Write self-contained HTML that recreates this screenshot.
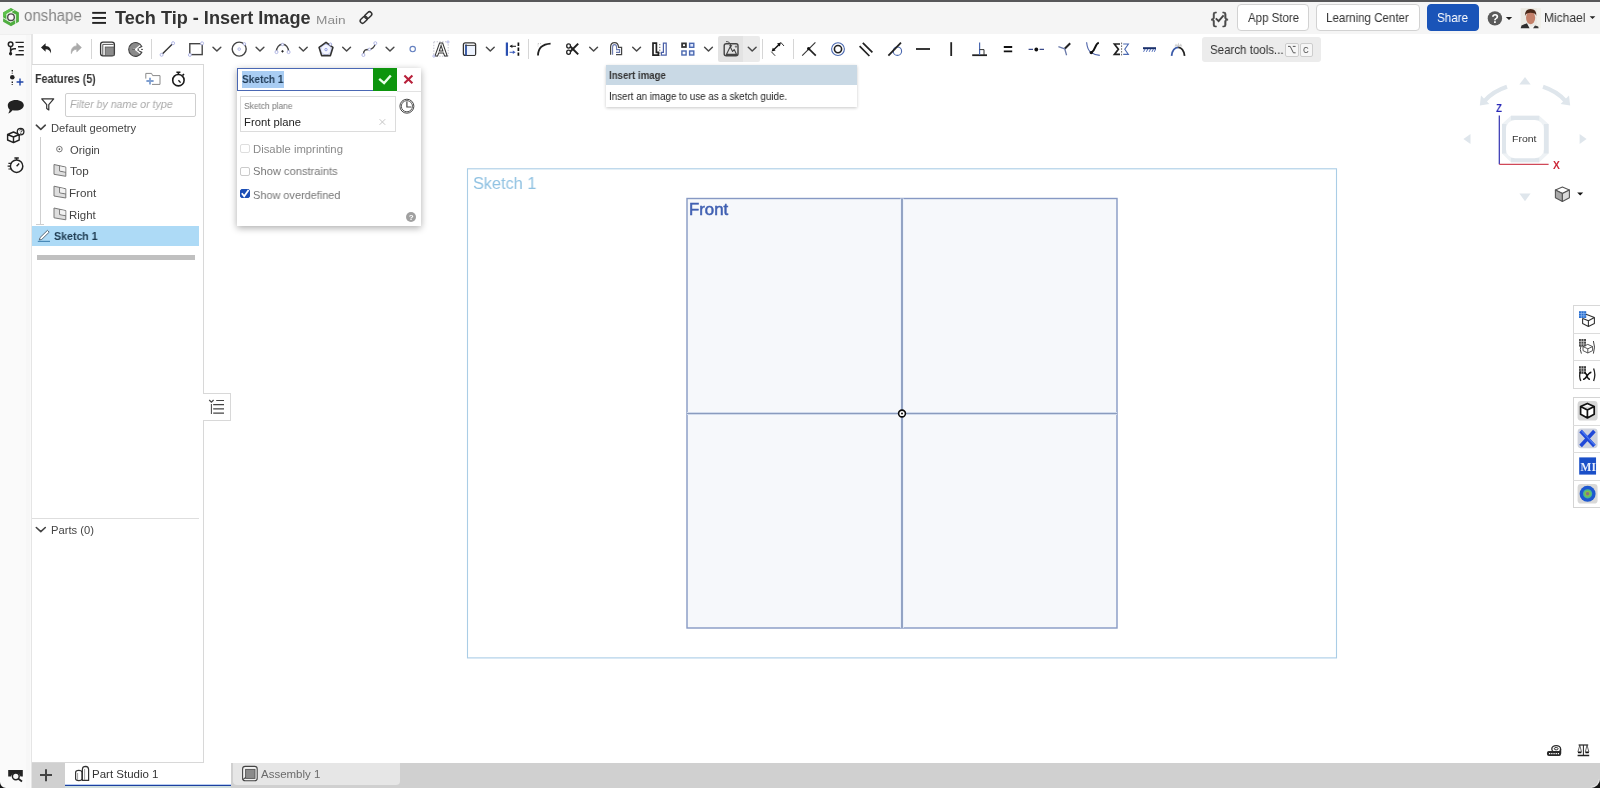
<!DOCTYPE html>
<html>
<head>
<meta charset="utf-8">
<title>Tech Tip - Insert Image</title>
<style>
*{box-sizing:border-box;margin:0;padding:0}
html,body{width:1600px;height:788px;overflow:hidden;background:#fff;font-family:"Liberation Sans",sans-serif;color:#333}
.a{position:absolute}
.t{position:absolute;white-space:nowrap;line-height:1;transform-origin:0 0;will-change:transform}
svg{position:absolute;overflow:visible;will-change:transform}
.btn{position:absolute;top:3.5px;height:27.5px;border:1px solid #d2d2d2;border-radius:4px;background:#fff}
.sep{position:absolute;top:39px;width:1px;height:20px;background:#d6d6d6}
.cb{position:absolute;width:9.5px;height:9.5px;border:1px solid #cfcfcf;border-radius:2px;background:#fff}
</style>
</head>
<body>
<!-- base regions -->
<div class="a" style="left:0;top:0;width:1600px;height:34px;background:#f5f5f5"></div>
<div class="a" style="left:0;top:0;width:1600px;height:1.5px;background:#58585a"></div>
<div class="a" style="left:0;top:34px;width:31px;height:754px;background:#fafafa;border-top:1px solid #efefef"></div><div class="a" style="left:26px;top:35px;width:4px;height:753px;background:#f7f7f7"></div><div class="a" style="left:31.1px;top:34px;width:1.5px;height:754px;background:#e5e5e5"></div>
<!-- feature panel -->
<div class="a" style="left:32px;top:64px;width:172px;height:699px;background:#fff;border-top:1px solid #d8d8d8;border-right:1px solid #d8d8d8;border-bottom:1px solid #d8d8d8"></div>
<div class="a" style="left:203px;top:393px;width:28px;height:28px;background:#fff;border:1px solid #d8d8d8;border-left:none"></div>
<div class="a" style="left:65px;top:92.5px;width:131px;height:24px;border:1px solid #cfcfcf;border-radius:2px;background:#fff"></div>
<div class="a" style="left:40px;top:137px;width:1px;height:87px;background:#cfcfcf"></div>
<div class="a" style="left:36px;top:224px;width:8px;height:1px;background:#cfcfcf"></div>
<div class="a" style="left:32px;top:226px;width:167px;height:19.5px;background:#addaf6"></div>
<div class="a" style="left:36.5px;top:254.5px;width:158px;height:5.5px;background:#c0c0c0"></div>
<div class="a" style="left:32px;top:518px;width:167px;height:1px;background:#dedede"></div>
<!-- bottom bar -->
<div class="a" style="left:32px;top:763px;width:1568px;height:25px;background:#d0d0d0"></div>
<div class="a" style="left:65px;top:763px;width:166px;height:25px;background:#fff"></div>
<div class="a" style="left:65px;top:783.6px;width:166px;height:1px;background:#b9cdf0"></div><div class="a" style="left:65px;top:784.5px;width:166px;height:2px;background:#1c40a0"></div>
<div class="a" style="left:65px;top:786px;width:166px;height:2px;background:#cfdede"></div>
<div class="a" style="left:232.5px;top:763px;width:167.5px;height:22px;background:#e6e6e6;border-radius:0 0 4px 4px"></div>
<!-- window corners -->
<svg style="left:0;top:782px" width="6" height="6"><path d="M0 0 A6 6 0 0 0 6 6 L0 6Z" fill="#151515"/></svg>
<svg style="left:1591px;top:779px" width="9" height="9"><path d="M9 0 A9 9 0 0 1 0 9 L9 9Z" fill="#151515"/><path d="M8.2 0 A8.6 8.6 0 0 1 0 8.2" fill="none" stroke="#e6e6e6" stroke-width="0.9"/></svg>

<!-- header buttons -->
<div class="btn" style="left:1236.5px;width:72.5px"></div>
<div class="btn" style="left:1316px;width:103.5px"></div>
<div class="btn" style="left:1427px;width:52px;background:#1a54b8;border-color:#1a54b8"></div>
<!-- search tools -->
<div class="a" style="left:1201.5px;top:37px;width:119.5px;height:24.5px;background:#ececec;border-radius:3px"></div>
<div class="a" style="left:1285px;top:42.5px;width:13.5px;height:14px;background:#f6f6f6;border:1px solid #cdcdcd;border-radius:2px"></div>
<div class="a" style="left:1299.5px;top:42.5px;width:13.5px;height:14px;background:#f6f6f6;border:1px solid #cdcdcd;border-radius:2px"></div>
<!-- toolbar separators -->
<div class="sep" style="left:91px"></div>
<div class="sep" style="left:151px"></div>
<div class="sep" style="left:528px"></div>
<div class="sep" style="left:761.5px"></div>
<div class="sep" style="left:793px"></div>
<!-- insert image highlight -->
<div class="a" style="left:718px;top:36px;width:25px;height:26px;background:#e3e3e3;border-radius:2px 0 0 2px"></div>
<div class="a" style="left:743px;top:36px;width:17px;height:26px;background:#ebebeb;border-radius:0 2px 2px 0"></div>

<!-- CANVAS -->
<svg style="left:0;top:0" width="1600" height="788">
<rect x="467.5" y="168.8" width="869" height="489.1" fill="none" stroke="#aacde6" stroke-width="1.1"/>
<rect x="687" y="198.5" width="430" height="429.5" fill="#f6f8fb" stroke="#8799c4" stroke-width="1.4"/>
<line x1="902" y1="198.5" x2="902" y2="628" stroke="#e8f0fb" stroke-width="3.4"/><line x1="687" y1="413.5" x2="1117" y2="413.5" stroke="#e8f0fb" stroke-width="3"/><line x1="902" y1="198.5" x2="902" y2="628" stroke="#8a9bbe" stroke-width="1.8"/>
<line x1="687" y1="413.5" x2="1117" y2="413.5" stroke="#8a9bbe" stroke-width="1.5"/>
<circle cx="902" cy="413.5" r="3.4" fill="#fff" stroke="#0a0a0a" stroke-width="1.6"/>
<circle cx="902" cy="413.5" r="1" fill="#0a0a0a"/>
</svg>

<!-- SKETCH DIALOG -->
<div class="a" style="left:236.5px;top:67.5px;width:184px;height:158.5px;background:#fff;box-shadow:0 2px 7px rgba(0,0,0,.33)"></div>
<div class="a" style="left:236.5px;top:67.5px;width:137px;height:23px;background:#fff;border:1.5px solid #4a68b4"></div>
<div class="a" style="left:241.5px;top:71px;width:42.5px;height:16.5px;background:#a9cdf3"></div>
<div class="a" style="left:373px;top:67.5px;width:24px;height:23px;background:#0d950d"></div>
<div class="a" style="left:397px;top:91px;width:23.5px;height:1px;background:#e2e2e2"></div>
<div class="a" style="left:239.5px;top:96px;width:156.5px;height:36px;border:1px solid #dcdcdc;background:#fff"></div>
<div class="cb" style="left:240px;top:143.5px;border-color:#dedede"></div>
<div class="cb" style="left:240px;top:166.5px;border-color:#cbcbcb"></div>
<div class="cb" style="left:240px;top:188.75px;background:#1c4fb6;border-color:#1c4fb6"></div>

<!-- TOOLTIP -->
<div class="a" style="left:605.5px;top:64.5px;width:251px;height:42px;background:#fff;box-shadow:0 1px 3px rgba(0,0,0,.22)"></div>
<div class="a" style="left:605.5px;top:64.5px;width:251px;height:20.5px;background:#c9d9e5"></div>

<!-- right panel boxes -->
<div class="a" style="left:1573px;top:305px;width:30px;height:84px;border:1px solid #d8d8d8;background:#fff"></div>
<div class="a" style="left:1573px;top:332.5px;width:30px;height:1px;background:#dcdcdc"></div>
<div class="a" style="left:1573px;top:360px;width:30px;height:1px;background:#dcdcdc"></div>
<div class="a" style="left:1573px;top:397px;width:30px;height:111px;border:1px solid #d4d4d4;background:#fff"></div>
<div class="a" style="left:1573px;top:424.5px;width:30px;height:1px;background:#dcdcdc"></div>
<div class="a" style="left:1573px;top:452px;width:30px;height:1px;background:#dcdcdc"></div>
<div class="a" style="left:1573px;top:479.5px;width:30px;height:1px;background:#dcdcdc"></div>

<svg style="left:0;top:0" width="1600" height="788"><g><path d="M11 8 L18.9 12.55 L18.9 21.65 L11 26.2 L3.1 21.65 L3.1 12.55Z" fill="#4fae40"/><path d="M11 8 L3.1 12.55 L3.1 17 L11 12Z" fill="#5cc04a"/><path d="M11 11.8 L15.6 14.45 L15.6 19.75 L11 22.4 L6.4 19.75 L6.4 14.45Z" fill="#f4faf2"/><path d="M6.4 14.45 L14.6 9.8 M15.6 14.45 L15.6 23.8 M11 22.4 L3 17.8" stroke="#eaf6e6" stroke-width="0.9" fill="none"/><circle cx="11" cy="17.2" r="3.3" fill="#fbf6fb" stroke="#4a4a4a" stroke-width="1.4"/></g>
<rect x="92.2" y="11.9" width="13.8" height="1.9" fill="#222"/>
<rect x="92.2" y="17.0" width="13.8" height="1.9" fill="#222"/>
<rect x="92.2" y="21.95" width="13.8" height="1.9" fill="#222"/>
<g transform="translate(366 17.5) rotate(-45)" fill="none" stroke="#333" stroke-width="1.5"><rect x="-7.2" y="-2.3" width="8" height="4.6" rx="2.3"/><rect x="-0.8" y="-2.3" width="8" height="4.6" rx="2.3"/></g>
<text x="1211" y="23.6" font-size="17" fill="#4a4a4a" stroke="#4a4a4a" stroke-width="0.5" font-family="Liberation Sans">{</text>
<text x="1222.4" y="23.6" font-size="17" fill="#4a4a4a" stroke="#4a4a4a" stroke-width="0.5" font-family="Liberation Sans">}</text>
<path d="M1215.8 18.4 L1218.6 21.2 L1223.6 15.4" fill="none" stroke="#444" stroke-width="1.9"/>
<circle cx="1494.9" cy="18.4" r="7.2" fill="#5a5a5a"/>
<text x="1491.6" y="22.7" font-size="12" font-weight="bold" fill="#fff" font-family="Liberation Sans">?</text>
<path d="M1505.8 17 L1512.2 17 L1509 20Z" fill="#222"/>
<path d="M1589.7 16.2 L1595.3 16.2 L1592.5 19.1Z" fill="#222"/>
<g><rect x="1520.7" y="8.1" width="20.1" height="20.1" fill="#ebe9e3"/><rect x="1537" y="8.1" width="3.8" height="20.1" fill="#f2f0ea"/><ellipse cx="1530.6" cy="17.8" rx="4.6" ry="6.4" fill="#c48068"/><path d="M1525 16 Q1524.6 9.2 1530.6 9 Q1536.8 9.2 1536.3 16 Q1535.5 12.8 1530.6 12.8 Q1526 12.8 1525 16Z" fill="#4a2818"/><path d="M1520.7 28.2 L1521.5 25.5 L1527 23.2 L1529.5 28.2Z" fill="#2e2e2e"/><path d="M1527 23.2 L1530.5 28.2 L1534 28.2 L1535 25 L1531 27 Z" fill="#f6f4f2"/><path d="M1533 28.2 L1535 25.4 L1538.2 26.6 L1538.6 28.2Z" fill="#3a3a3a"/></g>
<g fill="none" stroke="#222" stroke-width="1.5"><circle cx="10.6" cy="44.2" r="2.3"/><path d="M10.6 46.5 V55.2 M10.6 52 Q10.6 48.8 14.6 48.8 H16"/><circle cx="10.6" cy="53.6" r="0.9" fill="#222"/><path d="M15.5 42.4 H23.8 M18 46.8 H23.8 M18.6 50.6 H23.8 M15.5 54.8 H23.8" stroke-width="1.4"/></g>
<g><path d="M12.3 70 V73.5 M12.3 81.5 V85" stroke="#222" stroke-width="1.4" stroke-dasharray="1.5 1.2"/><circle cx="12.3" cy="77.3" r="2.3" fill="#222"/><path d="M16.6 82 H23.4 M20 78.6 V85.4" stroke="#1f45a8" stroke-width="1.4"/></g>
<path d="M15.8 100 C20.4 100 23.8 102.3 23.8 105.3 C23.8 108.3 20.4 110.6 15.8 110.6 C14.6 110.6 13.5 110.5 12.5 110.2 C11.5 111.6 10 112.8 8.2 113.5 C9 112.4 9.6 111 9.6 109.6 C8.4 108.6 7.8 107 7.8 105.3 C7.8 102.3 11.2 100 15.8 100Z" fill="#222"/>
<g fill="none" stroke="#222" stroke-width="1.4" stroke-linejoin="round"><path d="M7.6 134.5 L13.5 132 L19.2 134.5 V140 L13.5 142.6 L7.6 140Z M7.6 134.5 L13.5 137 L19.2 134.5 M13.5 137 V142.6"/><circle cx="20.6" cy="131.6" r="3.3" stroke-width="1.3" fill="#f8f8f8"/></g><text x="18.9" y="133.9" font-size="6.5" font-weight="bold" fill="#222" font-family="Liberation Sans">?</text>
<g fill="none" stroke="#222" stroke-width="1.5"><circle cx="16.6" cy="166.2" r="6.2"/><path d="M14.4 158 H18.8 M16.6 158 V160 M16.6 166.2 L19.2 163.4" stroke-width="1.4"/><path d="M8.4 163.4 H11.4 M7.6 166.2 H10.4 M8.4 169 H11.4" stroke-width="1.2"/></g>
<g><path d="M8.2 770 H22.8 V776.5 H20.5 A5 5 0 0 0 11 776.5 H8.2Z" fill="#222"/><circle cx="15.8" cy="776.3" r="3.4" fill="#f8f8f8" stroke="#222" stroke-width="1.5"/><path d="M18.4 778.8 L22 781.5" stroke="#222" stroke-width="1.8"/></g>
<path d="M41 47.5 L45.6 43.2 V45.9 C49.6 46 51.6 49 51 53.6 C50.2 50.8 48.8 49.4 45.6 49.3 V51.8Z" fill="#222"/>
<path d="M81.4 47.5 L76.8 43.2 V45.9 C72.8 46 70.8 49 71.4 53.6 C72.2 50.8 73.6 49.4 76.8 49.3 V51.8Z" fill="#aaa" stroke="#aaa" stroke-width="0.7" stroke-linejoin="round"/>
<g><rect x="100.6" y="42.2" width="13.8" height="13.6" rx="2.4" fill="#fff" stroke="#333" stroke-width="1.3"/><path d="M102.8 55 V44.4 H113.6" fill="none" stroke="#555" stroke-width="1"/><rect x="105.2" y="47" width="8.8" height="8.6" fill="#8c8c8c" stroke="#555" stroke-width="0.8"/></g>
<g><path d="M135.3 49.4 L141.9 46.6 A6.9 6.9 0 1 0 141.9 52.2Z" fill="#8a8a8a" stroke="#444" stroke-width="1.1" stroke-linejoin="round"/><path d="M135.3 49.4 L140.2 45.6 M135.3 49.4 L140.2 53.2 M133 49.4 H143" stroke="#fff" stroke-width="1.3"/><path d="M132.5 49.4 H135 M137.5 49.4 H139 M141 49.4 H143" stroke="#444" stroke-width="0.9"/></g>
<path d="M161.8 54.5 L172.9 43.5" stroke="#333" stroke-width="1.4"/>
<circle cx="161.6" cy="54.8" r="1.5" fill="#fff" stroke="#a6ace2" stroke-width="0.85"/>
<circle cx="173.1" cy="43.2" r="1.5" fill="#fff" stroke="#a6ace2" stroke-width="0.85"/>
<rect x="189.8" y="43.7" width="12.4" height="10.9" fill="none" stroke="#444" stroke-width="1.4"/>
<circle cx="189.9" cy="54.9" r="1.5" fill="#fff" stroke="#a6ace2" stroke-width="0.85"/>
<circle cx="202.1" cy="43.3" r="1.5" fill="#fff" stroke="#a6ace2" stroke-width="0.85"/>
<path d="M213.0 47.2 L216.9 51.0 L220.8 47.2" fill="none" stroke="#4a4a4a" stroke-width="1.5" stroke-linecap="round" stroke-linejoin="round"/>
<circle cx="239.2" cy="49.1" r="7" fill="none" stroke="#444" stroke-width="1.4"/>
<circle cx="239.2" cy="49.1" r="1.3" fill="#fff" stroke="#a6ace2" stroke-width="0.85"/>
<circle cx="244.4" cy="43.9" r="1.3" fill="#fff" stroke="#a6ace2" stroke-width="0.85"/>
<path d="M256.1 47.2 L260 51.0 L263.9 47.2" fill="none" stroke="#4a4a4a" stroke-width="1.5" stroke-linecap="round" stroke-linejoin="round"/>
<path d="M276.4 51.8 A6.1 7.6 0 0 1 288.6 51.8" fill="none" stroke="#444" stroke-width="1.4"/>
<circle cx="276.5" cy="52.1" r="1.5" fill="#fff" stroke="#a6ace2" stroke-width="0.85"/>
<circle cx="288.6" cy="52.1" r="1.5" fill="#fff" stroke="#a6ace2" stroke-width="0.85"/>
<circle cx="282.5" cy="44.5" r="1.2" fill="#fff" stroke="#a6ace2" stroke-width="0.85"/>
<path d="M282.5 49.9 L283.9 51.3 L282.5 52.7 L281.1 51.3Z" fill="#222"/>
<path d="M299.40000000000003 47.2 L303.3 51.0 L307.2 47.2" fill="none" stroke="#4a4a4a" stroke-width="1.5" stroke-linecap="round" stroke-linejoin="round"/>
<circle cx="326" cy="49.6" r="5.2" fill="#f4f6ff" stroke="#bcc4f0" stroke-width="0.9"/>
<path d="M326 42.4 L332.9 47.4 L330.4 55.6 L321.6 55.6 L319.1 47.4Z" fill="none" stroke="#333" stroke-width="1.6" stroke-linejoin="round"/>
<circle cx="326" cy="49.6" r="1.2" fill="none" stroke="#8a96e0" stroke-width="0.85"/>
<circle cx="330.5" cy="44.2" r="1.2" fill="#fff" stroke="#9aa0dc" stroke-width="0.85"/>
<path d="M342.70000000000005 47.2 L346.6 51.0 L350.5 47.2" fill="none" stroke="#4a4a4a" stroke-width="1.5" stroke-linecap="round" stroke-linejoin="round"/>
<path d="M363.4 54.6 C363.6 49 366 49.6 369.4 49.4 C373 49.2 374.2 47.6 375.3 43.6" fill="none" stroke="#444" stroke-width="1.4"/>
<circle cx="363.4" cy="55" r="1.5" fill="#fff" stroke="#a6ace2" stroke-width="0.85"/>
<circle cx="369.4" cy="49.4" r="1.3" fill="#fff" stroke="#a6ace2" stroke-width="0.85"/>
<circle cx="375.3" cy="43.2" r="1.5" fill="#fff" stroke="#a6ace2" stroke-width="0.85"/>
<path d="M386.1 47.2 L390 51.0 L393.9 47.2" fill="none" stroke="#4a4a4a" stroke-width="1.5" stroke-linecap="round" stroke-linejoin="round"/>
<circle cx="412.7" cy="49.1" r="2.7" fill="none" stroke="#6480c0" stroke-width="1.1"/>
<rect x="433.8" y="41.8" width="14.4" height="14.4" fill="none" stroke="#b4b4c4" stroke-width="0.8" stroke-dasharray="1.4 1.4"/>
<text x="434.6" y="55.6" font-size="18" font-weight="bold" fill="#fff" stroke="#333" stroke-width="1" font-family="Liberation Sans" textLength="13.2" lengthAdjust="spacingAndGlyphs">A</text>
<circle cx="448" cy="42" r="1.1" fill="#fff" stroke="#a6ace2" stroke-width="0.85"/>
<circle cx="433.9" cy="56.1" r="1.1" fill="#fff" stroke="#a6ace2" stroke-width="0.85"/>
<g><rect x="463.4" y="42.8" width="12.2" height="12.6" rx="2" fill="#fff" stroke="#333" stroke-width="1.3"/><rect x="466.8" y="45.9" width="8.2" height="8.9" fill="#eef4ff"/><path d="M466 44.6 V55.4" stroke="#2a4fa0" stroke-width="1.8"/><path d="M465.4 45.4 H475.6" stroke="#444" stroke-width="1"/></g>
<path d="M486.40000000000003 47.2 L490.3 51.0 L494.2 47.2" fill="none" stroke="#4a4a4a" stroke-width="1.5" stroke-linecap="round" stroke-linejoin="round"/>
<path d="M506.9 42.5 V55.8" stroke="#2a4fb0" stroke-width="2.2"/>
<path d="M518.4 42.5 V55.8" stroke="#111" stroke-width="1.7" stroke-dasharray="3.4 1.6"/>
<path d="M510 46.3 H516" stroke="#222" stroke-width="1.1"/><path d="M509.6 46.3 L512.4 44.6 V48Z" fill="#222"/>
<path d="M509.6 52.3 H514" stroke="#4a68c0" stroke-width="1.1"/><path d="M515.6 52.3 L512.8 50.6 V54Z" fill="#3a5ab8"/>
<path d="M538 55.4 Q538.2 44.4 550.6 43.6" fill="none" stroke="#222" stroke-width="1.8"/>
<path d="M538 43.6 H541 M538 43.6 V46.4" stroke="#bbb" stroke-width="0.8" stroke-dasharray="1 1"/>
<g fill="none" stroke="#222"><path d="M578.2 43.6 L570.6 51.2 M578.2 54.4 L570.6 46.8" stroke-width="2"/><ellipse cx="568.6" cy="46" rx="1.9" ry="2.1" stroke-width="1.3"/><ellipse cx="568.6" cy="52.2" rx="1.9" ry="2.1" stroke-width="1.3"/></g>
<path d="M589.7 47.2 L593.6 51.0 L597.5 47.2" fill="none" stroke="#4a4a4a" stroke-width="1.5" stroke-linecap="round" stroke-linejoin="round"/>
<g fill="none"><path d="M610.6 54.8 V47 Q610.6 42.6 614.6 42.6 Q618.2 42.6 618.6 47.4 H621.6 V54.6 H616" stroke="#444" stroke-width="1.2"/><path d="M612.6 54.8 V47.2 Q612.6 44.6 614.6 44.6 Q616.6 44.6 616.6 47.4 V49.6 H619.6 V52.4 H616" stroke="#6a7ab0" stroke-width="1.1"/></g>
<path d="M632.7 47.2 L636.6 51.0 L640.5 47.2" fill="none" stroke="#4a4a4a" stroke-width="1.5" stroke-linecap="round" stroke-linejoin="round"/>
<path d="M653 43.2 H656.4 V52.4 H658.4 V55.2 H653Z" fill="none" stroke="#222" stroke-width="1.7"/>
<path d="M659.8 44 V56" stroke="#555" stroke-width="1" stroke-dasharray="1.2 1.6"/>
<path d="M666.2 43.2 H663.4 V52.4 H661.4 V55.2 H666.2Z" fill="none" stroke="#4a60a8" stroke-width="1.2"/>
<rect x="682.1" y="43.4" width="3.8" height="3.6" fill="none" stroke="#333" stroke-width="1.8"/>
<rect x="689.6" y="43.3" width="4.2" height="4" fill="#dfe8ff" stroke="#4a68b0" stroke-width="1.4"/>
<rect x="681.9" y="51" width="4.2" height="4" fill="#fff" stroke="#4a68b0" stroke-width="1.4"/>
<rect x="689.6" y="51" width="4.2" height="4" fill="#dfe8ff" stroke="#4a68b0" stroke-width="1.4"/>
<path d="M704.6 47.2 L708.5 51.0 L712.4 47.2" fill="none" stroke="#4a4a4a" stroke-width="1.5" stroke-linecap="round" stroke-linejoin="round"/>
<g fill="none" stroke="#444"><rect x="724.2" y="43.8" width="13.8" height="12" rx="2" stroke-width="1.4"/><path d="M726.4 54.4 L730.2 46.8 L732.6 51.4 L734.2 49.6 L736.6 54.4Z" stroke-width="1.1" stroke-linejoin="round"/><circle cx="736" cy="46.6" r="0.7" stroke-width="0.8"/><path d="M726 41.6 Q730.4 41.4 730.8 46" stroke-width="0.9"/></g><path d="M729 45.2 L732.4 45.2 L730.8 47.6Z" fill="#333"/>
<path d="M748.3000000000001 47.2 L752.2 51.0 L756.1 47.2" fill="none" stroke="#4a4a4a" stroke-width="1.5" stroke-linecap="round" stroke-linejoin="round"/>
<path d="M773.4 50 L779.4 44.2" stroke="#111" stroke-width="1.5"/>
<path d="M771.6 51.6 L775.6 50.6 L772.8 47.8Z M781 42.6 L777 43.6 L779.8 46.4Z" fill="#111"/>
<path d="M780.6 42.2 L784 46 M771.4 51.8 L775.2 55.8" stroke="#333" stroke-width="1"/>
<path d="M802.2 55.6 L815.4 42.4" stroke="#333" stroke-width="1.1"/><path d="M808.4 48.4 L815.8 55.6" stroke="#222" stroke-width="1.7"/><circle cx="808.6" cy="48.6" r="1.6" fill="#111"/>
<circle cx="838" cy="49.1" r="6.4" fill="none" stroke="#4a68b0" stroke-width="1.1"/><circle cx="838" cy="49.1" r="3.6" fill="none" stroke="#222" stroke-width="1.6"/>
<path d="M859.6 46.2 L869.4 56 M862.8 42.8 L872.4 52.4" stroke="#222" stroke-width="1.7"/>
<circle cx="897.4" cy="51.2" r="4.2" fill="none" stroke="#4a68b0" stroke-width="1.1"/><path d="M888.4 55.6 L901 42.6" stroke="#222" stroke-width="1.8"/>
<path d="M916 49 H930" stroke="#222" stroke-width="1.8"/>
<path d="M951.2 42.2 V56" stroke="#222" stroke-width="1.8"/>
<path d="M972.2 55.2 H987" stroke="#222" stroke-width="1.8"/><path d="M979.6 42.6 V55" stroke="#4a68b0" stroke-width="1.2"/><path d="M979.6 49.6 H984 V55" fill="none" stroke="#333" stroke-width="1"/>
<path d="M1003.8 47 H1012.2 M1003.8 51.4 H1012.2" stroke="#111" stroke-width="1.8"/>
<path d="M1028.6 49.4 H1033 M1039.6 49.4 H1044" stroke="#3a4a8a" stroke-width="1.1"/><circle cx="1036.3" cy="49.5" r="1.9" fill="#111"/>
<path d="M1064.7 48.8 L1070.2 43.2" stroke="#222" stroke-width="2"/><path d="M1064.7 48.8 L1058.4 46.6 M1064.7 48.8 L1066.6 55.2" stroke="#6a7aaa" stroke-width="1.3" fill="none"/>
<path d="M1086.6 42.2 Q1087.4 50.4 1091.4 52.6 Q1094.6 55 1099.8 55.4" fill="none" stroke="#4a60a8" stroke-width="1.1"/>
<path d="M1091.4 52.6 C1096 50 1094.6 44 1098.8 42.6" fill="none" stroke="#111" stroke-width="2"/><circle cx="1091.3" cy="52.6" r="1.7" fill="#111"/>
<path d="M1120 44 H1114.4 L1118.4 49.2 L1114.4 54.4 H1120" fill="none" stroke="#222" stroke-width="1.7"/>
<path d="M1121.6 42.6 V56" stroke="#555" stroke-width="0.9" stroke-dasharray="1.6 1.2"/>
<path d="M1123.2 44 H1128.4 L1124.8 49.2 L1128.4 54.4 H1123.2" fill="none" stroke="#4a68b0" stroke-width="1.1"/>
<path d="M1143 48.2 H1156" stroke="#1a2f6a" stroke-width="2"/><path d="M1145 49 L1143.6 51.8 M1147.8 49 L1146.4 51.8 M1150.6 49 L1149.2 51.8 M1153.4 49 L1152 51.8 M1155.6 49 L1154.4 51.8" stroke="#3a5ab0" stroke-width="0.9"/>
<path d="M1174.4 46.4 L1176 43.4 L1177.2 45.6 L1178.4 42.6 L1179.6 45.6 L1180.8 43.4 L1182.4 46.6Z" fill="#d0d0d0"/>
<path d="M1171.6 55.8 Q1172.6 47.6 1178.2 47.4" fill="none" stroke="#3a5aa8" stroke-width="1.8"/><path d="M1178.2 47.4 Q1183.4 47.6 1184.6 55.8" fill="none" stroke="#222" stroke-width="1.8"/>
<path d="M1288 46.4 H1290.2 L1293.4 52.8 H1295.6 M1292.8 46.4 H1295.6" fill="none" stroke="#444" stroke-width="0.9"/>
<path d="M145.8 78.6 V73.4 H151.6 L152.6 75.6 H160 V84.4 H152" fill="none" stroke="#8a8a8a" stroke-width="1"/>
<path d="M146.4 81 H153.6 M150 77.8 V84.6" stroke="#7f9fd0" stroke-width="1.8"/>
<g fill="none" stroke="#1a1a1a"><circle cx="178.4" cy="80.2" r="5.7" stroke-width="1.6"/><path d="M176.4 72.2 H180.4 M178.4 72.4 V74.4 M182.6 75.4 L184 74" stroke-width="1.6"/><path d="M178.4 80.2 L180.6 82.6" stroke-width="1.4"/></g>
<path d="M41.7 98.9 H53.7 L48.8 104.6 V110 L46.7 108.6 V104.6Z" fill="none" stroke="#333" stroke-width="1.2" stroke-linejoin="round"/>
<path d="M36.3 125.2 L40.8 129.4 L45.3 125.2" fill="none" stroke="#444" stroke-width="1.6" stroke-linecap="round" stroke-linejoin="round"/>
<path d="M36.3 527.5 L40.8 531.7 L45.3 527.5" fill="none" stroke="#444" stroke-width="1.6" stroke-linecap="round" stroke-linejoin="round"/>
<circle cx="59.4" cy="149.1" r="2.8" fill="none" stroke="#6a6a6a" stroke-width="0.9"/><circle cx="59.4" cy="149.1" r="0.9" fill="#555"/>
<path d="M54 164.5 L65.8 167.1 V176.3 L54 174.3Z" fill="#dedede" stroke="#777" stroke-width="1"/>
<path d="M59.6 165.8 V171.1 L65.8 172.3" fill="none" stroke="#777" stroke-width="1"/>
<path d="M60.1 166.4 L65.3 167.5 V171.6 L60.1 170.6Z" fill="#f2f2f2"/>
<path d="M54 186.2 L65.8 188.79999999999998 V198.0 L54 196.0Z" fill="#dedede" stroke="#777" stroke-width="1"/>
<path d="M59.6 187.5 V192.79999999999998 L65.8 194.0" fill="none" stroke="#777" stroke-width="1"/>
<path d="M60.1 188.1 L65.3 189.2 V193.29999999999998 L60.1 192.29999999999998Z" fill="#f2f2f2"/>
<path d="M54 208 L65.8 210.6 V219.8 L54 217.8Z" fill="#dedede" stroke="#777" stroke-width="1"/>
<path d="M59.6 209.3 V214.6 L65.8 215.8" fill="none" stroke="#777" stroke-width="1"/>
<path d="M60.1 209.9 L65.3 211 V215.1 L60.1 214.1Z" fill="#f2f2f2"/>
<path d="M39.3 240 L40 237.6 L47.4 230.4 L49.2 232.2 L41.8 239.4Z" fill="#fff" stroke="#5a6a78" stroke-width="1" stroke-linejoin="round"/>
<path d="M37.8 241.4 H50" stroke="#4a8ab8" stroke-width="1.2"/>
<g stroke="#444" fill="none"><path d="M216.2 400.5 H224 M213.2 404.7 H224 M213.2 408.9 H224 M213.2 413.2 H224" stroke-width="1.2"/><path d="M211.4 404 V414" stroke-width="1"/><path d="M209.2 400 L211.4 402.2 L213.6 400" stroke-width="1.2"/></g>
<path d="M379.2 78.8 L384.1 83.1 L390.8 75.5" fill="none" stroke="#e8ffe8" stroke-width="2.4"/>
<path d="M404.4 75.4 L412.4 83.2 M412.4 75.4 L404.4 83.2" stroke="#b8203a" stroke-width="2.1"/>
<g fill="none" stroke="#444"><circle cx="406.9" cy="106.2" r="7" stroke-width="1"/><circle cx="406.9" cy="106.2" r="5.6" stroke-width="0.9"/><path d="M406.9 101.6 V107 H411.4" stroke-width="1.2"/></g>
<path d="M379.6 119.2 L385.2 124.8 M385.2 119.2 L379.6 124.8" stroke="#c4c4c4" stroke-width="1"/>
<path d="M241.8 193.2 L244.2 196.2 L248.6 190" fill="none" stroke="#fff" stroke-width="1.8"/>
<circle cx="411" cy="217" r="5" fill="#a0a0a0"/><text x="408.8" y="220" font-size="8" font-weight="bold" fill="#fff" font-family="Liberation Sans">?</text>
<path d="M1525 77 L1530.7 84.6 H1519.3Z" fill="#dfe6ec"/>
<path d="M1525 201.2 L1530.6 193.4 H1519.4Z" fill="#dfe6ec"/>
<path d="M1463.4 139 L1470.5 134 V144Z" fill="#dfe6ec"/>
<path d="M1586.6 139 L1579.6 134 V144Z" fill="#dfe6ec"/>
<path d="M1507 86.8 Q1492.6 91.4 1484.4 101.2" fill="none" stroke="#dfe6ec" stroke-width="4.2"/><path d="M1479.8 105.6 L1481 95.4 L1489.4 104Z" fill="#dfe6ec"/>
<path d="M1543 86.8 Q1557.4 91.4 1565.6 101.2" fill="none" stroke="#dfe6ec" stroke-width="4.2"/><path d="M1570.2 105.6 L1569 95.4 L1560.6 104Z" fill="#dfe6ec"/>
<path d="M1510.9 115.7 H1539.3 L1548.6 124 V153.4 L1539.3 162.3 H1510.9 L1502 153.4 V124Z" fill="#eef2f5"/>
<path d="M1510.9 115.7 H1539.3 V120.5 H1510.9Z M1510.9 157.8 H1539.3 V162.3 H1510.9Z M1502 124 H1506.4 V153.4 H1502Z M1544 124 H1548.6 V153.4 H1544Z" fill="#dfe6ec"/>
<rect x="1506" y="120" width="37.8" height="38.2" rx="9" fill="#fff"/>
<path d="M1499.3 115.6 V164.3" stroke="#3030b0" stroke-width="1.2"/><path d="M1499.3 164.3 H1548.6" stroke="#d04858" stroke-width="1.2"/>
<g stroke="#555" stroke-width="1.1" stroke-linejoin="round"><path d="M1562.4 187 L1569.4 190 L1562.4 193.6 L1555.4 190Z" fill="#fff"/><path d="M1555.4 190 L1562.4 193.6 V201.4 L1555.4 197.8Z" fill="#a8a8a8"/><path d="M1569.4 190 L1562.4 193.6 V201.4 L1569.4 197.8Z" fill="#dadada"/></g>
<path d="M1577.2 192.6 H1583.2 L1580.2 195.5Z" fill="#111"/>
<path d="M40 775.1 H52 M46 769.2 V781.2" stroke="#444" stroke-width="2"/>
<g fill="#fff" stroke="#333" stroke-width="1.2"><path d="M75.6 772.4 Q75.6 770.4 78.8 770.4 Q82 770.4 82 772.4 V778.8 Q82 780.6 78.8 780.6 Q75.6 780.6 75.6 778.8Z"/><path d="M82.4 780.4 V769 Q82.6 766.4 85.6 766.4 Q88.6 766.6 88.6 769.6 V780.4Z"/><path d="M77.6 773 V780 M84.6 769 V780" stroke-width="0.7" stroke="#777" fill="none"/></g>
<g stroke="#444" stroke-width="1.1"><rect x="242.6" y="766.4" width="14.6" height="14.4" rx="2.6" fill="#f2f2f2"/><rect x="245.6" y="769.4" width="9.4" height="9" fill="#8a8a8a" stroke="#555" stroke-width="0.9"/><path d="M243 779.6 L245.6 777.4" fill="none"/></g>
<g fill="none" stroke="#2a2a2a"><ellipse cx="1556.2" cy="748.9" rx="4.4" ry="3.3" stroke-width="1.3"/><ellipse cx="1556.2" cy="748.7" rx="1.9" ry="1.2" stroke-width="1"/><path d="M1560.6 749 V753.6" stroke-width="1.3"/><rect x="1547.6" y="751.6" width="12.8" height="3.8" rx="1.4" stroke-width="1.3" fill="#2a2a2a"/><path d="M1549 753.7 H1559" stroke="#fff" stroke-width="1.3" stroke-dasharray="1.3 0.9"/></g>
<g fill="none" stroke="#222"><path d="M1578.6 745 H1588.2" stroke-width="1.2"/><path d="M1583.4 745 V755" stroke-width="1"/><path d="M1577.6 755.5 H1589.2" stroke-width="1.5"/><path d="M1579.8 745.2 L1578 751.6 M1579.8 745.2 L1581.4 751.6 M1587 745.2 L1585.4 751.6 M1587 745.2 L1588.8 751.6" stroke-width="0.7"/></g><path d="M1577.6 751.4 H1581.8 L1581.2 753.2 H1578.2Z M1585 751.4 H1589.2 L1588.6 753.2 H1585.6Z" fill="#111"/>
<g><rect x="1579" y="311.2" width="7.2" height="6.8" fill="#2a6fd0"/><path d="M1579 313.5 H1586.2 M1579 315.8 H1586.2 M1581.4 311.2 V318 M1583.8 311.2 V318" stroke="#9cc0f0" stroke-width="0.6"/><path d="M1586 314.2 L1594.4 317.6 V323.4 L1588.4 326.4 L1582.6 323.4 V318.2 M1582.8 318.4 L1588.4 320.8 L1594.4 317.6 M1588.4 320.8 V326.4" fill="none" stroke="#333" stroke-width="1.1" stroke-linejoin="round"/></g>
<g><rect x="1579" y="339" width="7" height="7.6" fill="#4a4a4a"/><path d="M1579 341.5 H1586 M1579 344 H1586 M1581.3 339 V346.6 M1583.6 339 V346.6" stroke="#ddd" stroke-width="0.6"/><path d="M1581 345.5 Q1579.4 349.6 1581.4 353.6 M1593.4 341 Q1595.6 347 1593.4 353.6" fill="none" stroke="#444" stroke-width="1"/><path d="M1583 346.6 L1587.8 344.4 L1592.6 346.6 V350.6 L1587.8 353 L1583 350.6Z M1583 346.6 L1587.8 348.8 L1592.6 346.6 M1587.8 348.8 V353" fill="#fff" stroke="#444" stroke-width="0.9" stroke-linejoin="round"/></g>
<g><rect x="1579" y="366.2" width="7" height="7.6" fill="#3a3a3a"/><path d="M1579 368.7 H1586 M1579 371.2 H1586 M1581.3 366.2 V373.8 M1583.6 366.2 V373.8" stroke="#ddd" stroke-width="0.6"/><path d="M1580.6 371.6 Q1578.6 376.2 1580.8 381 M1593.6 368.6 Q1596 374.8 1593.6 381" fill="none" stroke="#222" stroke-width="1.3"/><path d="M1583 379.4 Q1584.8 379.4 1587 376 Q1589.2 372.4 1591.4 372.2 M1584.4 372.8 Q1586 372.8 1587 376 Q1588 379.4 1590 379.2" fill="none" stroke="#111" stroke-width="1.4"/></g>
<rect x="1577.6" y="401" width="20" height="19.6" rx="3.4" fill="#d6d6d6"/>
<path d="M1587.4 403.4 L1594.2 406.6 V414.2 L1587.4 418 L1580.6 414.2 V406.6Z M1580.6 406.6 L1587.4 410 L1594.2 406.6 M1587.4 410 V418" fill="#fff" stroke="#111" stroke-width="1.7" stroke-linejoin="round"/>
<rect x="1577.6" y="428.6" width="20" height="19.6" rx="3.4" fill="#cfd3de"/>
<path d="M1580.6 431 L1594.4 446 M1594.4 431 L1580.6 446" stroke="#2048d8" stroke-width="3.6"/><path d="M1581.6 431 L1595 445.4" stroke="#4a7af0" stroke-width="1.2"/>
<rect x="1579.2" y="457.4" width="17" height="17.2" fill="#1a4fc8"/>
<text x="1580.6" y="471" font-size="11.5" font-weight="bold" fill="#e8eefc" font-family="Liberation Serif">MI</text>
<rect x="1596.2" y="456" width="4" height="20" fill="#fff"/>
<rect x="1577.6" y="484" width="20" height="19.6" rx="3.4" fill="#d8d8d8"/>
<circle cx="1587.6" cy="493.8" r="8" fill="#1e58d0"/><circle cx="1587.6" cy="493.8" r="4.6" fill="#4ab890"/><circle cx="1587.6" cy="493.8" r="3" fill="#88c040"/><circle cx="1587.6" cy="493.8" r="1.7" fill="#887088"/></svg>

<span class="t" style="left:24.28px;top:8px;font-size:15.6px;color:#858585;transform:scaleX(0.9658)">onshape</span>
<span class="t" style="left:115.35px;top:9px;font-size:18.12px;color:#333;transform:scaleX(0.9982);font-weight:bold">Tech Tip - Insert Image</span>
<span class="t" style="left:316.34px;top:15px;font-size:11.81px;color:#8c8c8c;transform:scaleX(1.1579)">Main</span>
<span class="t" style="left:1247.50px;top:12px;font-size:12.4px;color:#333;transform:scaleX(0.9266)">App Store</span>
<span class="t" style="left:1326.07px;top:12px;font-size:12.4px;color:#333;transform:scaleX(0.9316)">Learning Center</span>
<span class="t" style="left:1437.28px;top:12px;font-size:12.4px;color:#fff;transform:scaleX(0.9375)">Share</span>
<span class="t" style="left:1544.03px;top:12px;font-size:12.4px;color:#333;transform:scaleX(0.9695)">Michael</span>
<span class="t" style="left:1209.54px;top:44px;font-size:12.4px;color:#333;transform:scaleX(0.9290)">Search tools...</span>
<span class="t" style="left:35.33px;top:74px;font-size:11.96px;color:#333;transform:scaleX(0.8962);font-weight:bold">Features (5)</span>
<span class="t" style="left:69.76px;top:99px;font-size:11.2px;color:#aaa;transform:scaleX(0.9488);font-style:italic">Filter by name or type</span>
<span class="t" style="left:51.00px;top:123px;font-size:11.2px;color:#444;transform:scaleX(0.9970)">Default geometry</span>
<span class="t" style="left:69.50px;top:145px;font-size:11.2px;color:#444;transform:scaleX(0.9913)">Origin</span>
<span class="t" style="left:69.74px;top:166px;font-size:11.2px;color:#444;transform:scaleX(1.0435)">Top</span>
<span class="t" style="left:68.96px;top:188px;font-size:11.2px;color:#444;transform:scaleX(1.0400)">Front</span>
<span class="t" style="left:68.98px;top:210px;font-size:11.2px;color:#444;transform:scaleX(1.0240)">Right</span>
<span class="t" style="left:54.16px;top:231px;font-size:11.2px;color:#1d3a50;transform:scaleX(0.9473);font-weight:bold">Sketch 1</span>
<span class="t" style="left:51.01px;top:525px;font-size:11.2px;color:#444;transform:scaleX(0.9939)">Parts (0)</span>
<span class="t" style="left:241.77px;top:74px;font-size:11.2px;color:#1f3a55;transform:scaleX(0.9011);font-weight:bold">Sketch 1</span>
<span class="t" style="left:244.27px;top:102px;font-size:8.7px;color:#777;transform:scaleX(0.9646)">Sketch plane</span>
<span class="t" style="left:244.39px;top:117px;font-size:11.2px;color:#222;transform:scaleX(1.0063)">Front plane</span>
<span class="t" style="left:252.74px;top:144px;font-size:11.2px;color:#8a8a8a;transform:scaleX(1.0115)">Disable imprinting</span>
<span class="t" style="left:253.25px;top:166px;font-size:11.2px;color:#777;transform:scaleX(0.9941)">Show constraints</span>
<span class="t" style="left:253.26px;top:190px;font-size:11.2px;color:#777;transform:scaleX(0.9773)">Show overdefined</span>
<span class="t" style="left:609.06px;top:70px;font-size:10.51px;color:#333;transform:scaleX(0.9193);font-weight:bold">Insert image</span>
<span class="t" style="left:608.79px;top:92px;font-size:10.14px;color:#222;transform:scaleX(0.9644)">Insert an image to use as a sketch guide.</span>
<span class="t" style="left:472.78px;top:175px;font-size:17.03px;color:#90c2e2;transform:scaleX(0.9575)">Sketch 1</span>
<span class="t" style="left:689.13px;top:201px;font-size:16.5px;color:#4060b2;transform:scaleX(1.0174);-webkit-text-stroke:0.5px #4060b2">Front</span>
<span class="t" style="left:1512.19px;top:134px;font-size:9.71px;color:#333;transform:scaleX(1.0805)">Front</span>
<span class="t" style="left:1496.39px;top:103px;font-size:11.59px;color:#2a2ab8;transform:scaleX(0.8308);font-weight:bold">Z</span>
<span class="t" style="left:1553.46px;top:161px;font-size:10.29px;color:#cc2a3a;transform:scaleX(0.9692);font-weight:bold">X</span>
<span class="t" style="left:91.72px;top:769px;font-size:11.2px;color:#333;transform:scaleX(1.0277)">Part Studio 1</span>
<span class="t" style="left:261.20px;top:769px;font-size:11.2px;color:#6a6a6a;transform:scaleX(1.0271)">Assembly 1</span>
<span class="t" style="left:1303.08px;top:45px;font-size:9.42px;color:#444;transform:scaleX(0.8333)">C</span>
</body>
</html>
